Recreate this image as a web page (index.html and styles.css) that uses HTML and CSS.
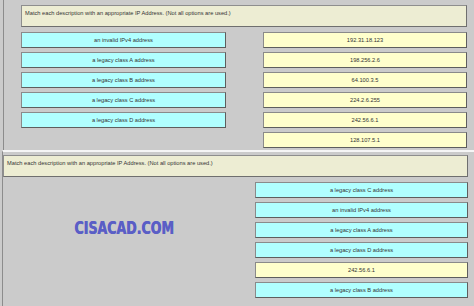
FILE: index.html
```html
<!DOCTYPE html>
<html lang="en">
<head>
  <meta charset="UTF-8">
  <meta name="viewport" content="width=device-width, initial-scale=1.0">
  <title>Match IP Addresses</title>
  <link rel="stylesheet" href="styles.css">
</head>
<body>
  <div class="panel panel-top">
    <div class="prompt">Match each description with an appropriate IP Address. (Not all options are used.)</div>
    <div class="match">
      <div class="col col-left">
        <div class="item desc">an invalid IPv4 address</div>
        <div class="item desc">a legacy class A address</div>
        <div class="item desc">a legacy class B address</div>
        <div class="item desc">a legacy class C address</div>
        <div class="item desc">a legacy class D address</div>
      </div>
      <div class="col col-right">
        <div class="item addr">192.31.18.123</div>
        <div class="item addr">198.256.2.6</div>
        <div class="item addr">64.100.3.5</div>
        <div class="item addr">224.2.6.255</div>
        <div class="item addr">242.56.6.1</div>
        <div class="item addr">128.107.5.1</div>
      </div>
    </div>
  </div>

  <div class="panel panel-bottom">
    <div class="prompt">Match each description with an appropriate IP Address. (Not all options are used.)</div>
    <div class="answer">
      <div class="brand"><span class="brand-text">CISACAD.COM</span></div>
      <div class="col col-answer">
        <div class="item desc">a legacy class C address</div>
        <div class="item desc">an invalid IPv4 address</div>
        <div class="item desc">a legacy class A address</div>
        <div class="item desc">a legacy class D address</div>
        <div class="item addr">242.56.6.1</div>
        <div class="item desc">a legacy class B address</div>
      </div>
    </div>
  </div>
</body>
</html>
```

FILE: styles.css
```css
body {
  margin: 0;
  background: #cbcbcb;
  font-family: "Liberation Sans", Arial, sans-serif;
  color: #333;
}
.panel {
  box-sizing: border-box;
  border-left: 1px solid #8c8c8c;
}
.panel-top {
  height: 150px;
  margin-left: 3px;
  padding: 5px 7px 0 17px;
}
.panel-bottom {
  height: 156px;
  margin-left: 2px;
  padding: 3px 6px 0 0;
  border-top: 2px solid #f6f6f6;
}
.prompt {
  box-sizing: border-box;
  height: 22px;
  padding: 4px 3px 0;
  background: #ededd3;
  border: 1px solid #8e8e8e;
  border-right-color: #6f6f6f;
  border-bottom-color: #6f6f6f;
  font-size: 5.7px;
  white-space: nowrap;
}
.match {
  display: flex;
  justify-content: space-between;
  margin-top: 5px;
}
.col {
  display: flex;
  flex-direction: column;
  gap: 4px;
}
.col-left {
  width: 205px;
}
.col-right {
  width: 204px;
}
.item {
  box-sizing: border-box;
  height: 16px;
  display: flex;
  align-items: center;
  justify-content: center;
  font-size: 5.7px;
  border: 1px solid #8a8a8a;
  border-right-color: #5e5e5e;
  border-bottom-color: #5e5e5e;
  white-space: nowrap;
}
.desc {
  background: #b0ffff;
}
.addr {
  background: #ffffcc;
}
.answer {
  display: flex;
  margin-top: 5px;
}
.brand {
  flex: 1;
  display: flex;
  justify-content: center;
  padding: 37px 9px 0 0;
}
.brand-text {
  display: inline-block;
  font-family: "DejaVu Sans", sans-serif;
  font-weight: bold;
  font-size: 18px;
  line-height: 18px;
  height: 18px;
  color: #5a5ec6;
  text-shadow: 0.6px 0 0 #5a5ec6;
  transform: scaleX(0.7);
}
.col-answer {
  width: 213px;
}
```
